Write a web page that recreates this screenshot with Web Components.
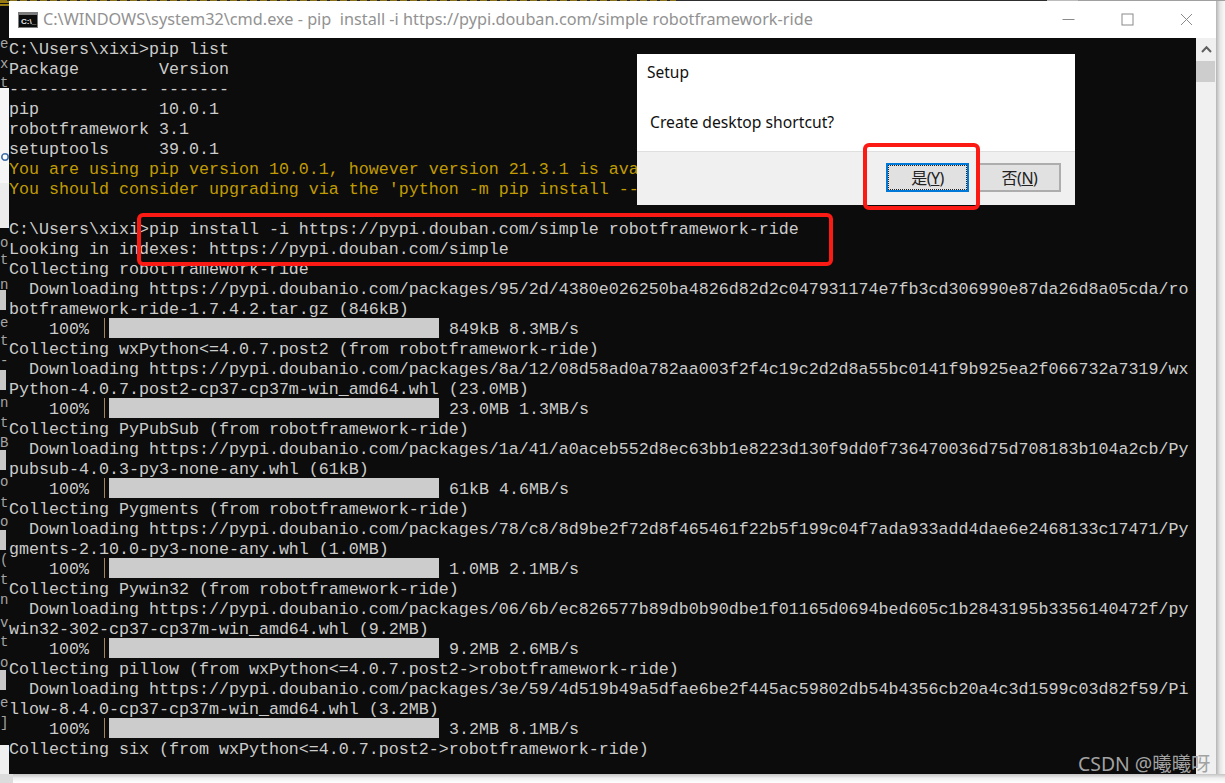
<!DOCTYPE html>
<html lang="en">
<head>
<meta charset="utf-8">
<title>cmd.exe - pip install</title>
<style>
  html, body { margin: 0; height: 100%; background: #fff; overflow: hidden; }
  body { display: flex; flex-direction: column; width: 1225px; height: 783px; position: relative; }
</style>
</head>
<body>
<top-strip></top-strip>
<div style="display:flex;height:773px">
  <left-strip></left-strip>
  <cmd-window title-text="C:\WINDOWS\system32\cmd.exe - pip  install -i https://pypi.douban.com/simple robotframework-ride">
    <c-line>C:\Users\xixi&gt;pip list</c-line>
    <c-line>Package        Version</c-line>
    <c-line>-------------- -------</c-line>
    <c-line>pip            10.0.1</c-line>
    <c-line>robotframework 3.1</c-line>
    <c-line>setuptools     39.0.1</c-line>
    <c-line warn>You are using pip version 10.0.1, however version 21.3.1 is available.</c-line>
    <c-line warn>You should consider upgrading via the 'python -m pip install --upgrade pip' command.</c-line>
    <c-line></c-line>
    <c-line>C:\Users\xixi&gt;pip install -i https://pypi.douban.com/simple robotframework-ride</c-line>
    <c-line>Looking in indexes: https://pypi.douban.com/simple</c-line>
    <c-line>Collecting robotframework-ride</c-line>
    <c-line>  Downloading https://pypi.doubanio.com/packages/95/2d/4380e026250ba4826d82d2c047931174e7fb3cd306990e87da26d8a05cda/ro</c-line>
    <c-line>botframework-ride-1.7.4.2.tar.gz (846kB)</c-line>
    <c-bar>849kB 8.3MB/s</c-bar>
    <c-line>Collecting wxPython&lt;=4.0.7.post2 (from robotframework-ride)</c-line>
    <c-line>  Downloading https://pypi.doubanio.com/packages/8a/12/08d58ad0a782aa003f2f4c19c2d2d8a55bc0141f9b925ea2f066732a7319/wx</c-line>
    <c-line>Python-4.0.7.post2-cp37-cp37m-win_amd64.whl (23.0MB)</c-line>
    <c-bar>23.0MB 1.3MB/s</c-bar>
    <c-line>Collecting PyPubSub (from robotframework-ride)</c-line>
    <c-line>  Downloading https://pypi.doubanio.com/packages/1a/41/a0aceb552d8ec63bb1e8223d130f9dd0f736470036d75d708183b104a2cb/Py</c-line>
    <c-line>pubsub-4.0.3-py3-none-any.whl (61kB)</c-line>
    <c-bar>61kB 4.6MB/s</c-bar>
    <c-line>Collecting Pygments (from robotframework-ride)</c-line>
    <c-line>  Downloading https://pypi.doubanio.com/packages/78/c8/8d9be2f72d8f465461f22b5f199c04f7ada933add4dae6e2468133c17471/Py</c-line>
    <c-line>gments-2.10.0-py3-none-any.whl (1.0MB)</c-line>
    <c-bar>1.0MB 2.1MB/s</c-bar>
    <c-line>Collecting Pywin32 (from robotframework-ride)</c-line>
    <c-line>  Downloading https://pypi.doubanio.com/packages/06/6b/ec826577b89db0b90dbe1f01165d0694bed605c1b2843195b3356140472f/py</c-line>
    <c-line>win32-302-cp37-cp37m-win_amd64.whl (9.2MB)</c-line>
    <c-bar>9.2MB 2.6MB/s</c-bar>
    <c-line>Collecting pillow (from wxPython&lt;=4.0.7.post2-&gt;robotframework-ride)</c-line>
    <c-line>  Downloading https://pypi.doubanio.com/packages/3e/59/4d519b49a5dfae6be2f445ac59802db54b4356cb20a4c3d1599c03d82f59/Pi</c-line>
    <c-line>llow-8.4.0-cp37-cp37m-win_amd64.whl (3.2MB)</c-line>
    <c-bar>3.2MB 8.1MB/s</c-bar>
    <c-line>Collecting six (from wxPython&lt;=4.0.7.post2-&gt;robotframework-ride)</c-line>
  </cmd-window>
  <div style="width:9px;background:linear-gradient(90deg,#b4b4b4,#e6e6e6 45%,#fafafa)"></div>
</div>
<div style="flex:1;display:flex;background:linear-gradient(180deg,#c4c4c4,#efefef 45%,#fff)">
  <div style="width:13px;background:#dcdcdc"></div>
</div>

<setup-dialog></setup-dialog>
<red-mark style="left:137px;top:213px;width:696px;height:53px"></red-mark>
<red-mark style="left:863px;top:143px;width:117px;height:67px"></red-mark>
<water-mark>CSDN @曦曦呀</water-mark>

<script>
const FONT_UI = '"Noto Sans", "Noto Sans CJK SC", sans-serif';

class TopStrip extends HTMLElement {
  constructor() {
    super();
    this.attachShadow({ mode: 'open' }).innerHTML = `
      <style>
        :host { display: flex; height: 1px; flex: none; background: #a0a0a0; }
        .text { width: 676px; background: repeating-linear-gradient(90deg, #8d7418 0 7px, #2a2a2a 7px 10px); }
        .dark { width: 371px; background: #2e2e2e; }
        .mid { width: 31px; background: #bcbcbc; }
      </style>
      <div class="text"></div><div class="dark"></div><div class="mid"></div>`;
  }
}

// what shows of the window behind, left of the cmd window
class LeftStrip extends HTMLElement {
  constructor() {
    super();
    const bits = [
      [28, ''], [20, 'e'], [19, 'x'], [15, 't'],
    ];
    const lower = [
      [5, ''], [17, 'o'], [25, 't'], [15, 'n'], ['b', 20], [3, ''], [18, 'e'], [20, 't'], [19, '-'], ['b', 20],
      [3, ''], [20, 'n'], [20, 't'], [17, 'B'], ['b', 20], [2, ''], [21, 'o'], [19, 't'], [18, 'o'], ['b', 20],
      [20, '('], [20, 't'], [23, 'n'], [19, 'v'], [21, 't'], [17, 'o'], ['b', 20], [3, ''], [20, 'e'], [20, ']'], [12, ''],
    ];
    const row = ([a, b]) => a === 'b'
      ? `<div class="blk" style="height:${b}px"></div>`
      : `<div class="ch" style="height:${a}px">${b}</div>`;
    this.attachShadow({ mode: 'open' }).innerHTML = `
      <style>
        :host { display: flex; flex-direction: column; width: 9px; flex: none; overflow: hidden; background: #0c0c0c;
                font: 14px/20px "Liberation Mono", monospace; color: #a6a6a6; }
        .top { height: 5px; background: repeating-linear-gradient(180deg, #9a7d10 0 2px, #111 2px 3px); flex: none; }
        .ch { flex: none; white-space: pre; overflow: hidden; line-height: 20px; }
        .blk { flex: none; background: #c8c8c8; width: 6px; }
        .paper { height: 95px; flex: none; background: #f6f6f6; display: flex; flex-direction: column; }
        .grey { height: 45px; flex: none; background: #ececec; }
        .rest { flex: 1; background: #f0f0f0; }
        svg { display: block; margin: 64px 0 0 0; flex: none; }
      </style>
      <div class="top"></div>
      ${bits.map(row).join('')}
      <div class="paper">
        <svg width="9" height="10" viewBox="0 0 9 10"><circle cx="5" cy="5" r="3.2" fill="#fff" stroke="#3f6fa8" stroke-width="1.6"/></svg>
      </div>
      <div class="grey"></div>
      ${lower.map(row).join('')}
      <div class="rest"></div>`;
  }
}

class WinButton extends HTMLElement {
  constructor() {
    super();
    const kind = this.getAttribute('kind');
    const shapes = {
      min: '<path d="M0.5 6.5H12.5"/>',
      max: '<rect x="1" y="1" width="11" height="11"/>',
      close: '<path d="M1 1L12 12M12 1L1 12"/>',
    };
    this.attachShadow({ mode: 'open' }).innerHTML = `
      <style>
        :host { display: flex; width: 59px; align-items: center; justify-content: center; flex: none; }
        svg { display: block; fill: none; stroke: #8a8a8a; stroke-width: 1; }
      </style>
      <svg width="13" height="13" viewBox="0 0 13 13">${shapes[kind]}</svg>`;
  }
}

class CmdWindow extends HTMLElement {
  constructor() {
    super();
    this.attachShadow({ mode: 'open' }).innerHTML = `
      <style>
        :host { display: flex; flex-direction: column; width: 1207px; flex: none; background: #fff; }
        .title { display: flex; align-items: center; height: 37px; flex: none; padding-left: 9px; }
        .icon { display: block; flex: none; margin-right: 5px; }
        .name { flex: 1; white-space: pre; overflow: hidden; font: 16.25px/37px ${FONT_UI}; color: #929292; }
        .body { flex: 1; display: flex; min-height: 0; }
        .console { flex: 1; background: #0c0c0c; overflow: hidden; display: flex; flex-direction: column; }
        .bar { width: 20px; flex: none; background: #f0f0f0; display: flex; flex-direction: column; align-items: center; }
        .bar svg { display: block; margin-top: 7px; }
        .thumb { width: 19px; height: 21px; margin-top: 8px; background: #cdcdcd; align-self: flex-start; }
      </style>
      <div class="title">
        <svg class="icon" width="20" height="16" viewBox="0 0 20 16">
          <rect width="20" height="16" fill="#7d7d7d"/>
          <rect x="1" y="3" width="18" height="12" fill="#0c0c0c"/>
          <text x="3" y="12" font-family="Liberation Sans, sans-serif" font-size="8" font-weight="700" fill="#e8e8e8">C:\\_</text>
        </svg>
        <span class="name"></span>
        <win-button kind="min"></win-button>
        <win-button kind="max"></win-button>
        <win-button kind="close"></win-button>
      </div>
      <div class="body">
        <div class="console"><slot></slot></div>
        <div class="bar">
          <svg width="11" height="8" viewBox="0 0 11 8"><path d="M1 7L5.5 2.2L10 7" fill="none" stroke="#606060" stroke-width="2"/></svg>
          <div class="thumb"></div>
        </div>
      </div>`;
    this.shadowRoot.querySelector('.name').textContent = this.getAttribute('title-text');
  }
}

class CLine extends HTMLElement {
  constructor() {
    super();
    // no whitespace around the slot: this host is white-space: pre
    this.attachShadow({ mode: 'open' }).innerHTML = `<style>
        :host { display: block; height: 20px; flex: none; white-space: pre; overflow: hidden;
                font: 16.67px/24px "Liberation Mono", monospace; color: #cccccc; }
        :host([warn]) { color: #c19c00; }
      </style><slot></slot>`;
  }
}

class CBar extends HTMLElement {
  constructor() {
    super();
    this.attachShadow({ mode: 'open' }).innerHTML = `
      <style>
        :host { display: flex; height: 20px; flex: none; white-space: pre; overflow: hidden;
                font: 16.67px/24px "Liberation Mono", monospace; color: #cccccc; }
        .pct { width: 90px; flex: none; }
        .tick { width: 10px; flex: none; display: flex; justify-content: center; }
        .tick i { width: 1px; background: #a8825a; }
        .fill { width: 330px; flex: none; background: #cccccc; }
        .end { padding-left: 10px; }
      </style>
      <span class="pct">    100%</span>
      <span class="tick"><i></i></span>
      <span class="fill"></span>
      <span class="end"><slot></slot></span>`;
  }
}

class SetupDialog extends HTMLElement {
  constructor() {
    super();
    this.attachShadow({ mode: 'open' }).innerHTML = `
      <style>
        :host { position: absolute; left: 637px; top: 54px; width: 438px; height: 151px; display: flex; flex-direction: column;
                background: #fff; font: 15.5px/20px ${FONT_UI}; color: #111; }
        .head { height: 36px; flex: none; padding: 8px 0 0 10px; box-sizing: border-box; }
        .msg { height: 61px; flex: none; padding: 22px 0 0 13px; box-sizing: border-box; font-size: 15.7px; }
        .foot { flex: 1; display: flex; justify-content: flex-end; align-items: flex-start; gap: 9px; padding: 11px 14px 0 0;
                background: #f0f0f0; border-top: 1px solid #dfdfdf; }
        u-btn { flex: none; }
      </style>
      <div class="head">Setup</div>
      <div class="msg">Create desktop shortcut?</div>
      <div class="foot">
        <u-btn focused label="是" key-name="Y"></u-btn>
        <u-btn label="否" key-name="N"></u-btn>
      </div>`;
  }
}

class UBtn extends HTMLElement {
  constructor() {
    super();
    this.attachShadow({ mode: 'open' }).innerHTML = `
      <style>
        :host { display: flex; width: 83px; height: 29px; box-sizing: border-box; position: relative; align-items: center; justify-content: center;
                background: #e1e1e1; border: 2px solid #adadad; font-size: 16px; letter-spacing: -0.5px; color: #222; }
        :host([focused]) { border-color: #0078d7; }
        :host([focused])::after { content: ''; position: absolute; inset: 0; border: 1px dotted #222; }
      </style>
      <span>${this.getAttribute('label')}(<u>${this.getAttribute('key-name')}</u>)</span>`;
  }
}

class RedMark extends HTMLElement {
  constructor() {
    super();
    this.attachShadow({ mode: 'open' }).innerHTML = `
      <style>
        :host { position: absolute; display: block; box-sizing: border-box; border: 4px solid #fb1a14; border-radius: 6px; }
      </style>`;
  }
}

class WaterMark extends HTMLElement {
  constructor() {
    super();
    this.attachShadow({ mode: 'open' }).innerHTML = `
      <style>
        :host { position: absolute; left: 1078px; top: 751px; display: block; white-space: nowrap;
                font: 19.4px/26px ${FONT_UI}; color: #a2a2a2; }
      </style>
      <slot></slot>`;
  }
}

customElements.define('top-strip', TopStrip);
customElements.define('left-strip', LeftStrip);
customElements.define('win-button', WinButton);
customElements.define('cmd-window', CmdWindow);
customElements.define('c-line', CLine);
customElements.define('c-bar', CBar);
customElements.define('u-btn', UBtn);
customElements.define('setup-dialog', SetupDialog);
customElements.define('red-mark', RedMark);
customElements.define('water-mark', WaterMark);
</script>
</body>
</html>
